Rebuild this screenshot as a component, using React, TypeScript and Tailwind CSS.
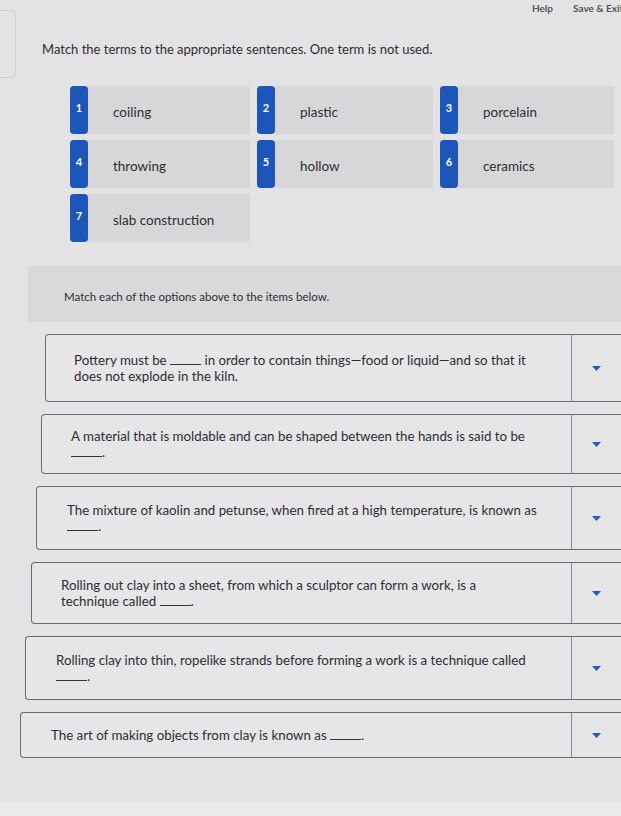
const terms = [
  { n: 1, t: 'coiling' },
  { n: 2, t: 'plastic' },
  { n: 3, t: 'porcelain' },
  { n: 4, t: 'throwing' },
  { n: 5, t: 'hollow' },
  { n: 6, t: 'ceramics' },
  { n: 7, t: 'slab construction' },
];

// line breaks follow the reference's wrapping
const items = [
  {
    ml: 'ml-[45px]', h: 'h-[68px]', pl: 'pl-[28px]',
    lines: [<>Pottery must be <Blank /> in order to contain things—food or liquid—and so that it</>, <>does not explode in the kiln.</>],
  },
  {
    ml: 'ml-[41px]', h: 'h-[60px]', pl: 'pl-[29px]',
    lines: [<>A material that is moldable and can be shaped between the hands is said to be</>, <><Blank />.</>],
  },
  {
    ml: 'ml-[36px]', h: 'h-[64px]', pl: 'pl-[30px]',
    lines: [<>The mixture of kaolin and petunse, when fired at a high temperature, is known as</>, <><Blank />.</>],
  },
  {
    ml: 'ml-[31px]', h: 'h-[62px]', pl: 'pl-[29px]',
    lines: [<>Rolling out clay into a sheet, from which a sculptor can form a work, is a</>, <>technique called <Blank />.</>],
  },
  {
    ml: 'ml-[25px]', h: 'h-[64px]', pl: 'pl-[30px]',
    lines: [<>Rolling clay into thin, ropelike strands before forming a work is a technique called</>, <><Blank />.</>],
  },
  {
    ml: 'ml-[20px]', h: 'h-[46px]', pl: 'pl-[30px]',
    lines: [<>The art of making objects from clay is known as <Blank />.</>],
  },
];

function Blank() {
  return <span className="inline-block w-[31px] border-b border-[#333] align-baseline" />;
}

function Caret() {
  return (
    <svg width="9" height="5" viewBox="0 0 9 5">
      <path d="M0 0 L9 0 L4.5 5 Z" fill="#1f5bc4" />
    </svg>
  );
}

export default function App() {
  return (
    <div className="w-[621px] h-[816px] overflow-hidden bg-[#e3e2e4] text-[#2e2e30]" style={{ fontFamily: 'Lato, "Liberation Sans", sans-serif' }}>
      <div className="flex justify-end gap-5 h-[16px] pt-[1px] text-[10px] font-bold text-[#555]">
        <span>Help</span>
        <span className="w-[48px] whitespace-nowrap overflow-hidden">Save &amp; Exit</span>
      </div>

      <div className="flex">
        <div className="w-[16px] h-[68px] mt-[-6px] border border-l-0 border-[#cfcfd1] rounded-r-md" />
        <p className="ml-[26px] mt-[24px] text-[13px]">Match the terms to the appropriate sentences. One term is not used.</p>
      </div>

      <div className="grid grid-cols-[180px_176px_174px] gap-x-[7px] gap-y-[6px] ml-[70px] mt-[8px]">
        {terms.map((x) => (
          <div key={x.n} className="flex h-[48px] bg-[#d7d6d9]">
            <div className="w-[18px] bg-[#1c56bb] rounded-sm text-white text-[11px] font-bold flex justify-center pt-[14px]">{x.n}</div>
            <div className="pl-[25px] pt-[16px] text-[13.5px]">{x.t}</div>
          </div>
        ))}
      </div>

      <div className="ml-[28px] mt-[24px] h-[56px] bg-[#d9d8da] pl-[36px] pt-[22px] text-[11.5px]">
        Match each of the options above to the items below.
      </div>

      <div className="flex flex-col gap-[12px] mt-[12px]">
        {items.map((it, i) => (
          <div key={i} className={`${it.ml} ${it.h} flex border border-[#6b6b70] border-r-0 rounded-l-sm bg-[#e6e5e7]`}>
            <div className={`flex-1 flex items-center ${it.pl} text-[13.3px] leading-[16px]`}>
              <div>
                {it.lines.map((l, j) => (
                  <div key={j} className="whitespace-nowrap">{l}</div>
                ))}
              </div>
            </div>
            <div className="w-[50px] border-l border-[#8a8a8e] flex items-center justify-center">
              <Caret />
            </div>
          </div>
        ))}
      </div>

      <div className="mt-[44px] h-[20px] bg-[#ebeaec]" />
    </div>
  );
}
